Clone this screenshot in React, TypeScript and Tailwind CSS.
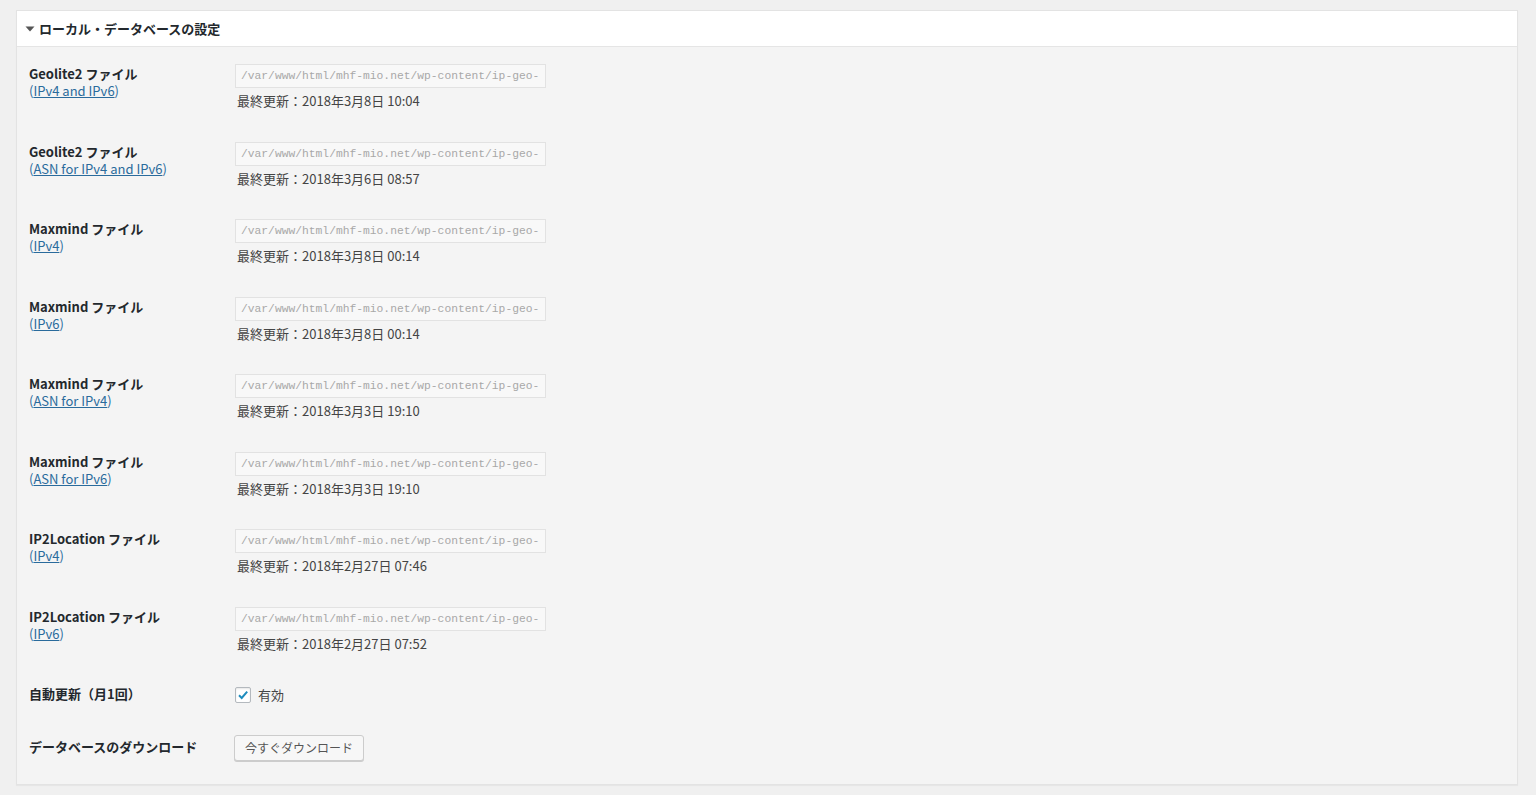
import React from "react";

const rows = [
  { name: "Geolite2 ファイル", link: "IPv4 and IPv6", date: "2018年3月8日 10:04" },
  { name: "Geolite2 ファイル", link: "ASN for IPv4 and IPv6", date: "2018年3月6日 08:57" },
  { name: "Maxmind ファイル", link: "IPv4", date: "2018年3月8日 00:14" },
  { name: "Maxmind ファイル", link: "IPv6", date: "2018年3月8日 00:14" },
  { name: "Maxmind ファイル", link: "ASN for IPv4", date: "2018年3月3日 19:10" },
  { name: "Maxmind ファイル", link: "ASN for IPv6", date: "2018年3月3日 19:10" },
  { name: "IP2Location ファイル", link: "IPv4", date: "2018年2月27日 07:46" },
  { name: "IP2Location ファイル", link: "IPv6", date: "2018年2月27日 07:52" },
];

const font = { fontFamily: '"Noto Sans CJK JP", "Noto Sans", sans-serif' };

export default function App() {
  return (
    <div className="min-h-[795px] bg-[#f0f0f0] pt-[10px] pl-[16px] pr-[18px] pb-[9px]" style={font}>
      <div className="border border-[#e3e3e3] shadow-[0_1px_1px_rgba(0,0,0,0.04)] bg-[#f4f4f4]">
        <div className="h-[36px] bg-white border-b border-[#e5e5e5] flex items-center pl-[8px]">
          <svg width="10" height="6" viewBox="0 0 10 6" className="mr-[4px]">
            <polygon points="0.5,0.5 9.5,0.5 5,5.5" fill="#555" />
          </svg>
          <span className="text-[13px] font-semibold text-[#23282d] leading-[17px]">ローカル・データベースの設定</span>
        </div>
        <div className="px-[12px]">
          {rows.map((r, i) => (
            <div key={i} className="flex h-[77.5px] pt-[17px]">
              <div className="w-[206px] shrink-0 pt-[1px] text-[13px] leading-[17px]">
                <div className="font-semibold text-[#23282d]">{r.name}</div>
                <div className="text-[#2a6b9c]">
                  (<span className="underline">{r.link}</span>)
                </div>
              </div>
              <div>
                <div
                  className="w-[311px] h-[24px] border border-[#e2e2e2] bg-[#f8f8f8] text-[#a8a8a8] text-[11.3px] leading-[22px] pl-[5px] overflow-hidden whitespace-nowrap"
                  style={{ fontFamily: '"Liberation Mono", "DejaVu Sans Mono", monospace' }}
                >
                  /var/www/html/mhf-mio.net/wp-content/ip-geo-
                </div>
                <div className="mt-[4px] pl-[2px] text-[13px] leading-[18px] text-[#444]">最終更新：{r.date}</div>
              </div>
            </div>
          ))}
          <div className="flex h-[53px] pt-[18px]">
            <div className="w-[206px] shrink-0 text-[13px] leading-[17px] font-semibold text-[#23282d]">自動更新（月1回）</div>
            <div className="flex items-start">
              <div className="mt-[2px] w-[16px] h-[16px] border border-[#b4b9be] bg-white rounded-[2px] shadow-[inset_0_1px_2px_rgba(0,0,0,0.1)] flex items-center justify-center">
                <svg width="12" height="12" viewBox="0 0 12 12">
                  <path d="M2 6.3 L4.7 9 L10.2 2.6" fill="none" stroke="#1e8cbe" strokeWidth="2" />
                </svg>
              </div>
              <span className="ml-[7px] text-[13px] leading-[18px] mt-[1px] text-[#444]">有効</span>
            </div>
          </div>
          <div className="flex pt-[14px] pb-[23px]">
            <div className="w-[206px] shrink-0 pt-[4px] text-[13px] leading-[17px] font-semibold text-[#23282d]">データベースのダウンロード</div>
            <div className="-ml-[1px]">
              <button className="h-[26px] px-[10px] border border-[#cccccc] bg-[#f7f7f7] rounded-[3px] shadow-[0_1px_0_#cccccc] text-[12px] leading-[24px] text-[#555]">
                今すぐダウンロード
              </button>
            </div>
          </div>
        </div>
      </div>
    </div>
  );
}
